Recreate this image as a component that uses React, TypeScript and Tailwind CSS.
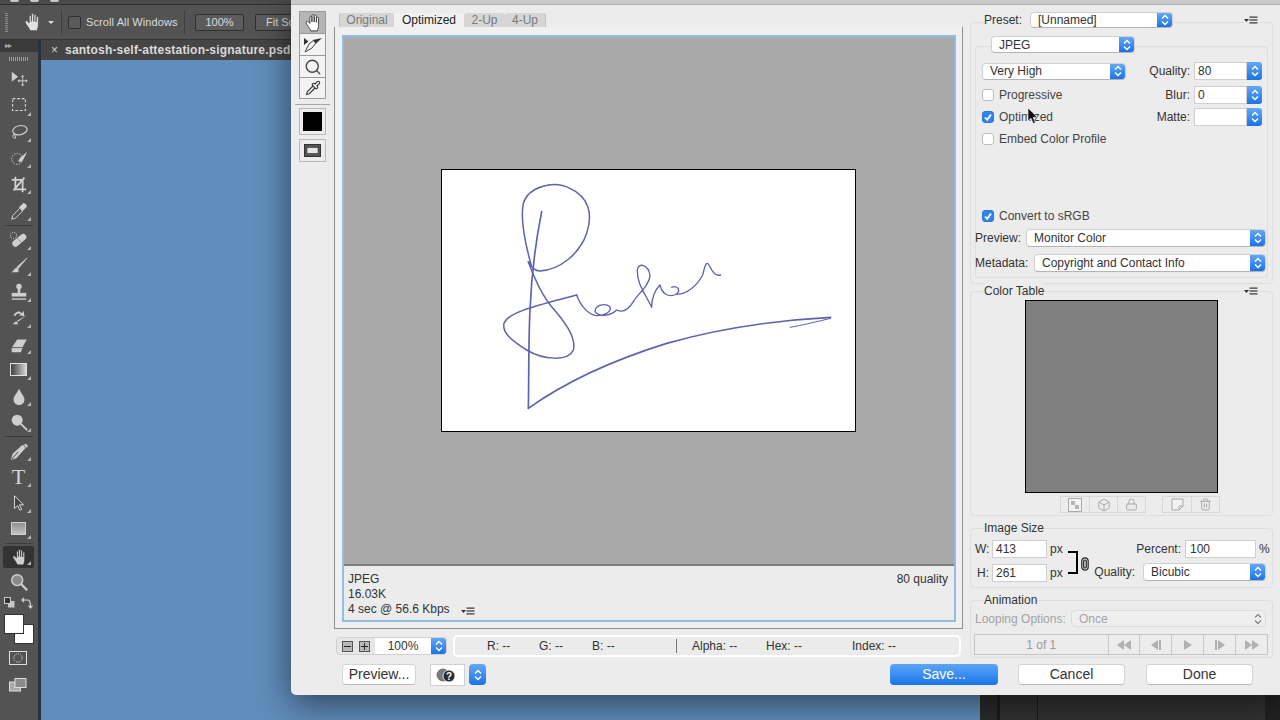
import React from "react";
import { Search, Pipette, Box, Lock, Trash2 } from "lucide-react";

function HandIcon({ size, fill, stroke, sw = 1 }: { size: number; fill: string; stroke: string; sw?: number }) {
  return (
    <svg width={size} height={size} viewBox="-2 0 20 20" fill={fill} stroke={stroke} strokeWidth={sw} strokeLinejoin="round" strokeLinecap="round">
      <path d="M6 18.5 C5 15.5 2 12.5 1.2 10.5 C0.8 8.8 2.8 8 4 9.5 L5.2 11 V4.5 C5.2 3 7.4 3 7.4 4.5 V9.5 V2.8 C7.4 1.2 9.8 1.2 9.8 2.8 V9.5 V3.5 C9.8 2 12.1 2 12.1 3.5 V10 V5.5 C12.1 4 14.4 4 14.4 5.5 V12 C14.4 15 13.6 16.8 13.2 18.5 Z" />
    </svg>
  );
}

function Chevrons({ color = "#fff" }: { color?: string }) {
  return (
    <svg width="8" height="12" viewBox="0 0 8 12" fill="none" stroke={color} strokeWidth="1.4">
      <path d="M1 4.5 L4 1.5 L7 4.5" />
      <path d="M1 7.5 L4 10.5 L7 7.5" />
    </svg>
  );
}

function Stepper({ className }: { className: string }) {
  return (
    <div className={"flex items-center justify-center shrink-0 bg-gradient-to-b from-[#62a8f6] to-[#1a72e6] " + className}>
      <Chevrons />
    </div>
  );
}

function Select({ label, className }: { label: string; className: string }) {
  return (
    <div className={"flex shrink-0 items-stretch bg-white rounded-[4px] border border-[#d0d0d0] border-b-[#b4b4b4] overflow-hidden " + className}>
      <div className="flex-1 pl-[7px] flex items-center text-[#333] leading-none whitespace-nowrap">{label}</div>
      <Stepper className="w-[15px]" />
    </div>
  );
}

function StepField({ value, className }: { value: string; className: string }) {
  return (
    <div className={"flex shrink-0 h-[18px] " + className}>
      <div className="w-[53px] bg-white border border-[#cfcfcf] pl-[3px] flex items-center text-[#333]">{value}</div>
      <Stepper className="w-[15px] rounded-r-[3px]" />
    </div>
  );
}

function Check({ checked, label }: { checked?: boolean; label: string }) {
  return (
    <div className="flex items-center h-[18px] ml-[6px] text-[#444]">
      <div className={"w-[12px] h-[12px] rounded-[3px] flex items-center justify-center border " + (checked ? "bg-[#3084ec] border-[#2a78dc]" : "bg-white border-[#bdbdbd]")}>
        {checked && (
          <svg width="10" height="10" viewBox="0 0 10 10" fill="none" stroke="#fff" strokeWidth="1.8">
            <path d="M2 5.5 L4.2 7.8 L8 2.4" />
          </svg>
        )}
      </div>
      <span className="ml-[5px]">{label}</span>
    </div>
  );
}

function MenuIcon({ className = "" }: { className?: string }) {
  return (
    <svg className={className} width="14" height="8" viewBox="0 0 14 8" fill="#333">
      <path d="M0 3 H5 L2.5 6 Z" />
      <rect x="5.5" y="0.5" width="8" height="1.2" />
      <rect x="5.5" y="3.4" width="8" height="1.2" />
      <rect x="5.5" y="6.3" width="8" height="1.2" />
    </svg>
  );
}

function Tool({ children, more = true, active = false, tall = false }: { children: React.ReactNode; more?: boolean; active?: boolean; tall?: boolean }) {
  return (
    <div className={"relative flex items-center justify-center w-[31px] ml-[3px] " + (active ? "h-[22px] bg-[#333333] rounded-[2px] my-[1px]" : tall ? "h-[26.3px]" : "h-[26px]")}>
      {children}
      {more && <div className="absolute right-[3px] bottom-[3px] w-0 h-0 border-l-[4px] border-l-transparent border-b-[4px] border-b-[#b5b5b5]" />}
    </div>
  );
}

function Ico({ children }: { children: React.ReactNode }) {
  return (
    <svg width="20" height="20" viewBox="0 0 22 22" fill="#cfcfcf" stroke="none">
      {children}
    </svg>
  );
}

function Sep() {
  return <div className="h-px bg-[#3c3c3c] mx-[5px] my-[1px] w-[28px]" />;
}

function Toolbar() {
  return (
    <div className="w-[41px] shrink-0 flex flex-col bg-[#535353] border-r-[3px] border-r-[#28323c] h-full">
      <div className="h-[12px] bg-[#3b3b3b] flex items-center pl-[5px] text-[#aaa] text-[8px] leading-none tracking-[-1px]">▸▸</div>
      <div className="h-[14px] flex items-center justify-center">
        <div className="w-[20px] h-[4px] bg-[repeating-linear-gradient(90deg,#9a9a9a_0,#9a9a9a_1px,transparent_1px,transparent_2px)]" />
      </div>
      <Tool tall more={false}>
        <Ico>
          <path d="M3 3 L3 14 L10 8.5 Z" />
          <path d="M15 7.5 V18 M10 13 H20" stroke="#cfcfcf" strokeWidth="1" />
          <path d="M15 6.5 l-2 2 h4 Z M15 19 l-2 -2 h4 Z M9.5 13 l2 -2 v4 Z M20.5 13 l-2 -2 v4 Z" />
        </Ico>
      </Tool>
      <Tool tall>
        <Ico>
          <rect x="4" y="4" width="14" height="13" fill="none" stroke="#d8d8d8" strokeWidth="1.2" strokeDasharray="3 2" />
        </Ico>
      </Tool>
      <Tool tall>
        <Ico>
          <ellipse cx="12" cy="9" rx="8" ry="5" fill="none" stroke="#cfcfcf" strokeWidth="1.3" transform="rotate(-12 12 9)" />
          <path d="M6 13 C3 15 4 18 7 18 C8 16 6 15 6 13" fill="none" stroke="#cfcfcf" strokeWidth="1.1" />
        </Ico>
      </Tool>
      <Tool tall>
        <Ico>
          <circle cx="9" cy="12" r="6" fill="none" stroke="#d8d8d8" strokeWidth="1.1" strokeDasharray="1.5 1.5" />
          <path d="M20 4 L12 11 L10 15 L14 15 L16 12 Z" />
        </Ico>
      </Tool>
      <Tool tall>
        <Ico>
          <path d="M7 3 V17 H19 M3 6.5 H15 V20 M17 4 L5 18" fill="none" stroke="#d0d0d0" strokeWidth="2" />
        </Ico>
      </Tool>
      <Tool tall>
        <Ico>
          <path d="M3 20 L4 16 L12 8 L15 11 L7 19 Z" fill="none" stroke="#d4d4d4" strokeWidth="1.1" />
          <path d="M11 7 L15 3 C17 1 21 5 19 7 L15 11 Z" fill="#d4d4d4" />
        </Ico>
      </Tool>
      <Sep />
      <Tool>
        <Ico>
          <rect x="2" y="8" width="18" height="7" rx="3.5" transform="rotate(-40 11 11)" fill="#cfcfcf" />
          <path d="M8 8 L14 14" stroke="#555" strokeWidth="1" strokeDasharray="1 1" />
          <circle cx="5" cy="6" r="3.5" fill="none" stroke="#ddd" strokeWidth="1" strokeDasharray="1.2 1.2" />
        </Ico>
      </Tool>
      <Tool>
        <Ico>
          <path d="M20 2 L10 14 L8.5 12.5 Z" stroke="#cfcfcf" strokeWidth="0.8" />
          <path d="M9 13 C5 13 6 17 2 18 H10 C11 16 11 15 9 13 Z" />
        </Ico>
      </Tool>
      <Tool>
        <Ico>
          <circle cx="11" cy="5" r="3" />
          <rect x="9.6" y="7" width="2.8" height="5" />
          <path d="M3 12 H19 V16 H3 Z" />
          <rect x="3" y="18" width="16" height="1.5" />
        </Ico>
      </Tool>
      <Tool>
        <Ico>
          <path d="M5 8 C8 3 12 3 14 6 L16 3 L17 9 L11 8 L13 7 C11 5 8 6 7 9 Z" />
          <path d="M19 8 L10 15 L9 14 Z M9 15 C6 14 6 18 2 18 H10 Z" />
        </Ico>
      </Tool>
      <Tool>
        <Ico>
          <path d="M3 15 L9 6 H20 L15 15 L13 20 H3 Z" />
          <path d="M3 15 H15 L20 6" fill="none" stroke="#555" strokeWidth="1" />
        </Ico>
      </Tool>
      <Tool>
        <svg width="17" height="13" viewBox="0 0 18 14">
          <defs>
            <linearGradient id="grd" x1="0" x2="1" y1="0" y2="0">
              <stop offset="0" stopColor="#3a3a3a" />
              <stop offset="1" stopColor="#d8d8d8" />
            </linearGradient>
          </defs>
          <rect x="0.5" y="0.5" width="17" height="13" fill="url(#grd)" stroke="#eee" />
        </svg>
      </Tool>
      <Tool>
        <Ico>
          <path d="M11 3 C13 8 17 11 17 15 A6 6 0 0 1 5 15 C5 11 9 8 11 3 Z" />
        </Ico>
      </Tool>
      <Tool>
        <Ico>
          <circle cx="9" cy="9" r="6" />
          <path d="M13 13 L20 20" stroke="#cfcfcf" strokeWidth="2" />
        </Ico>
      </Tool>
      <Sep />
      <Tool>
        <Ico>
          <path d="M19 3 L21 6 L18 8 L8 19 L2 21 L4 14 L14 5 Z" />
          <path d="M15 3 L20 9" stroke="#535353" strokeWidth="1" />
          <path d="M3 20 L10 12" stroke="#333" strokeWidth="1" />
        </Ico>
      </Tool>
      <Tool>
        <span className="font-['Liberation_Serif',serif] text-[22px] leading-none text-[#d4d4d4]">T</span>
      </Tool>
      <Tool>
        <Ico>
          <path d="M6 3 V17 L9.5 14 L12 19 L14 18 L11.5 13 L16 13 Z" fill="#444" stroke="#e6e6e6" strokeWidth="1" />
        </Ico>
      </Tool>
      <Tool>
        <svg width="15" height="13" viewBox="0 0 16 14">
          <defs>
            <linearGradient id="rct" x1="0" x2="0" y1="0" y2="1">
              <stop offset="0" stopColor="#8f8f8f" />
              <stop offset="1" stopColor="#c4c4c4" />
            </linearGradient>
          </defs>
          <rect x="0.5" y="0.5" width="15" height="13" fill="url(#rct)" stroke="#d8d8d8" />
        </svg>
      </Tool>
      <Sep />
      <Tool active>
        <HandIcon size={18} fill="#cfcfcf" stroke="#333333" sw={0.8} />
      </Tool>
      <Tool more={false}>
        <Ico>
          <circle cx="9" cy="9" r="6" fill="#8a8a8a" stroke="#d0d0d0" strokeWidth="1.6" />
          <path d="M13 13 L20 20" stroke="#cfcfcf" strokeWidth="2.5" />
        </Ico>
      </Tool>
      <div className="flex items-center justify-between pl-[4px] pr-[5px] h-[14px] mt-[1px]">
        <svg width="11" height="11" viewBox="0 0 11 11">
          <rect x="4" y="4" width="6.5" height="6.5" fill="#c8c8c8" />
          <rect x="0.5" y="0.5" width="6" height="6" fill="#333" stroke="#ccc" />
        </svg>
        <svg width="12" height="12" viewBox="0 0 12 12" fill="none" stroke="#d8d8d8" strokeWidth="1.2">
          <path d="M1 3 H7 C9 3 9.5 5 9.5 10" />
          <path d="M3 1 L1 3 L3 5 M7.5 8.5 L9.5 11 L11.5 8.5" />
        </svg>
      </div>
      <div className="flex flex-col ml-[4px] mt-[4px] w-[30px]">
        <div className="w-[20px] h-[20px] bg-white border border-[#333] z-10" />
        <div className="w-[20px] h-[20px] bg-white border border-[#333] -mt-[10px] ml-[10px]" />
      </div>
      <div className="flex justify-center mt-[7px] pr-[3px]">
        <svg width="18" height="14" viewBox="0 0 18 14" fill="none">
          <rect x="0.5" y="0.5" width="17" height="13" stroke="#ddd" />
          <circle cx="9" cy="7" r="4.2" stroke="#ddd" strokeDasharray="1.2 1.2" />
        </svg>
      </div>
      <div className="flex justify-center mt-[13px] pr-[2px]">
        <svg width="18" height="14" viewBox="0 0 18 14">
          <rect x="0.5" y="4" width="11" height="9" fill="#aaa" stroke="#ddd" />
          <rect x="6" y="0.5" width="11" height="9" fill="#8a8a8a" stroke="#ddd" />
        </svg>
      </div>
    </div>
  );
}

function OptionsBar() {
  return (
    <div className="h-[40px] shrink-0 bg-[#535353] relative flex flex-col">
      <div className="h-[5px] bg-[#4a4a4a] border-b border-b-[#2e2e2e] flex items-start gap-[11px] pl-[10px]">
        <div className="w-[9px] h-[2px] bg-[#c8c8c8] rounded-b-full" />
        <div className="w-[9px] h-[2px] bg-[#c8c8c8] rounded-b-full" />
        <div className="w-[9px] h-[2px] bg-[#c8c8c8] rounded-b-full" />
      </div>
      <div className="flex-1 flex items-center text-[11px] text-[#dcdcdc] border-b border-b-[#333]">
        <div className="ml-[5px] w-[3px] h-[20px] bg-[repeating-linear-gradient(0deg,#8c8c8c_0,#8c8c8c_1px,transparent_1px,transparent_2px)]" />
        <div className="ml-[14px]">
          <HandIcon size={20} fill="#e2e2e2" stroke="#535353" sw={0.8} />
        </div>
        <div className="ml-[6px] w-0 h-0 border-x-[3px] border-x-transparent border-t-[3px] border-t-[#ddd]" />
        <div className="ml-[7px] w-px h-[24px] bg-[#3f3f3f]" />
        <div className="ml-[6px] w-[13px] h-[13px] rounded-[2px] bg-[#5a5a5a] border border-[#2f2f2f]" />
        <span className="ml-[5px] w-[98px] whitespace-nowrap tracking-[0.1px]">Scroll All Windows</span>
        <div className="w-px h-[24px] bg-[#3f3f3f]" />
        <div className="ml-[10px] w-[49px] h-[17px] flex items-center justify-center border border-[#2f2f2f] rounded-[2px] bg-[#5c5c5c]">100%</div>
        <div className="ml-[11px] w-[70px] h-[17px] pl-[10px] flex items-center border border-[#2f2f2f] rounded-[2px] bg-[#5c5c5c]">Fit Screen</div>
      </div>
    </div>
  );
}

function SlicePen() {
  return (
    <svg width="20" height="18" viewBox="0 0 20 18" fill="none">
      <path d="M1 2 L1 9 L5.5 5.5 Z" fill="#333" />
      <path d="M19 2 L10 4 L12.5 8 Z" fill="#333" />
      <path d="M11 4 L6 8 L2 16 L9 12 L13 7" stroke="#444" strokeWidth="1" />
    </svg>
  );
}

function ToolColumn() {
  return (
    <div className="w-[43px] shrink-0 pt-[11px] flex flex-col items-start">
      <div className="ml-[8px] w-[27px] flex flex-col border border-[#9a9a9a]">
        <div className="h-[22px] bg-[#b5b5b5] flex items-center justify-center border-b border-[#9a9a9a]">
          <HandIcon size={19} fill="#fff" stroke="#444" sw={1} />
        </div>
        <div className="h-[22px] bg-[#f3f3f3] flex items-center justify-center border-b border-[#9a9a9a]">
          <SlicePen />
        </div>
        <div className="h-[22px] bg-[#f3f3f3] flex items-center justify-center border-b border-[#9a9a9a]">
          <Search size={18} stroke="#444" strokeWidth={1.8} />
        </div>
        <div className="h-[20px] bg-[#f3f3f3] flex items-center justify-center">
          <Pipette size={16} stroke="#333" strokeWidth={1.6} />
        </div>
      </div>
      <div className="ml-[4px] mt-[5px] w-[35px] h-px bg-[#a8a8a8]" />
      <div className="ml-[8px] mt-[3px] w-[27px] h-[27px] border border-[#b8b8b8] flex items-center justify-center">
        <div className="w-[19px] h-[19px] bg-black" />
      </div>
      <div className="ml-[8px] mt-[4px] w-[27px] h-[23px] border border-[#b8b8b8] flex items-center justify-center">
        <svg width="17" height="13" viewBox="0 0 17 13">
          <rect x="0.5" y="0.5" width="16" height="12" fill="#555" stroke="#333" />
          <rect x="3" y="3.5" width="11" height="6" fill="#e6e6e6" stroke="#333" strokeWidth="0.6" />
        </svg>
      </div>
    </div>
  );
}

function Signature() {
  return (
    <svg className="w-full h-full" viewBox="-114 0 1239 783" fill="none" stroke="#5f62ae" strokeWidth="5" strokeLinecap="round" strokeLinejoin="round">
      <path d="M185 125 C170 200 155 300 150 420 C145 520 147 620 145 715" />
      <path d="M145 715 C250 640 400 570 560 520 C720 475 900 450 1052 442" />
      <path d="M1052 445 C1010 455 970 465 930 472" strokeWidth="3" />
      <path d="M155 290 C135 220 120 150 130 100 C145 50 220 30 270 55 C325 80 340 130 320 190 C300 250 240 300 180 303 C165 303 155 295 145 275" strokeWidth="4.5" />
      <path d="M145 275 C165 330 190 380 215 410 C250 450 290 500 280 540 C265 575 190 570 140 540 C100 515 65 490 72 460 C85 425 180 405 290 375" strokeWidth="4.5" />
      <path d="M290 375 C300 405 325 435 350 437 C375 437 395 425 390 410 C375 398 345 405 345 425 C360 445 395 435 410 420 C430 430 445 420 460 395 C475 370 510 345 510 315 C505 285 475 275 472 300 C470 340 495 370 515 412 C515 385 525 360 540 345 C545 370 565 385 590 372 C605 360 590 345 575 352" strokeWidth="4" />
      <path d="M590 372 C615 375 650 350 668 315 C675 285 680 268 690 290 C700 312 710 318 722 315" strokeWidth="4" />
    </svg>
  );
}

function Tabs() {
  return (
    <div className="h-[14px] flex pl-[5px] text-[#7a7a7a] leading-none">
      <div className="w-[55px] bg-[#d6d6d6] rounded-t-[3px] flex items-center justify-center border-l border-[#c0c0c0]">Original</div>
      <div className="w-[70px] bg-[#f1f1f1] rounded-t-[3px] flex items-center justify-center text-[#222]">Optimized</div>
      <div className="w-[41px] bg-[#d6d6d6] rounded-t-[3px] flex items-center justify-center">2-Up</div>
      <div className="w-[41px] bg-[#d6d6d6] rounded-t-[3px] flex items-center justify-center border-r border-[#c0c0c0]">4-Up</div>
    </div>
  );
}

function CenterColumn() {
  return (
    <div className="w-[629px] shrink-0 pt-[13px] flex flex-col">
      <Tabs />
      <div className="h-[602px] shrink-0 bg-[#f0f0f0] border-x border-b border-[#8e8e8e] pt-[8px] pl-[7px] pr-[6px]">
        <div className="h-[587px] border-2 border-[#8fbde8] flex flex-col bg-[#ececec]">
          <div className="h-[527px] shrink-0 bg-[#a9a9a9] flex items-center justify-center pr-[2px]">
            <div className="w-[415px] h-[263px] bg-white border border-black">
              <Signature />
            </div>
          </div>
          <div className="h-[2px] shrink-0 bg-[#7e7e7e]" />
          <div className="flex-1 flex justify-between pl-[4px] pr-[6px] pt-[6px] leading-[15px] text-[#333]">
            <div className="flex flex-col">
              <span>JPEG</span>
              <span>16.03K</span>
              <div className="flex items-center">
                <span>4 sec @ 56.6 Kbps</span>
                <MenuIcon className="ml-[11px] mt-[2px]" />
              </div>
            </div>
            <span>80 quality</span>
          </div>
        </div>
      </div>
      <div className="mt-[6px] h-[22px] shrink-0 flex items-center pl-[2px]">
        <div className="w-[111px] h-[18px] flex items-center border border-[#d0d0d0] rounded-[4px] bg-[#e6e6e6] overflow-hidden">
          <div className="ml-[5px] w-[11px] h-[11px] border border-[#555] bg-[#b8b8b8] flex items-center justify-center">
            <div className="w-[7px] h-px bg-[#222]" />
          </div>
          <div className="relative ml-[6px] w-[11px] h-[11px] border border-[#555] bg-[#b8b8b8] flex items-center justify-center">
            <div className="w-[7px] h-px bg-[#222]" />
            <div className="absolute left-[4px] top-[1px] w-px h-[7px] bg-[#222]" />
          </div>
          <div className="ml-[5px] flex-1 h-full bg-white flex items-center justify-center text-[#333]">100%</div>
          <Stepper className="w-[15px] h-full" />
        </div>
        <div className="ml-[6px] w-[508px] h-[22px] border-2 border-white rounded-[5px] flex items-center text-[#333] bg-[#ebebeb]">
          <span className="ml-[32px] w-[52px]">R: --</span>
          <span className="w-[53px]">G: --</span>
          <span className="w-[84px]">B: --</span>
          <div className="w-px h-[14px] bg-[#777]" />
          <span className="ml-[15px] w-[74px]">Alpha: --</span>
          <span className="w-[86px]">Hex: --</span>
          <span>Index: --</span>
        </div>
      </div>
    </div>
  );
}

function Group({ className, children }: { className: string; children: React.ReactNode }) {
  return <div className={"border border-[#dedede] rounded-[4px] shrink-0 " + className}>{children}</div>;
}

function IconBtn({ children, className = "w-[28px]" }: { children: React.ReactNode; className?: string }) {
  return <div className={"h-[15px] flex items-center justify-center border-l border-[#d8d8d8] first:border-l-0 " + className}>{children}</div>;
}

function PlayBtn({ d }: { d: string }) {
  return (
    <div className="w-[32px] border-l border-[#c8c8c8] flex items-center justify-center">
      <svg width="16" height="10" viewBox="0 0 16 10" fill="#b0b0b0">
        <path d={d} />
      </svg>
    </div>
  );
}

function RightColumn() {
  return (
    <div className="flex-1 pt-[22px] flex flex-col text-[#333]">
      <Group className="ml-[7px] w-[303px] h-[262px]">
        <div className="-mt-[11px] h-[16px] flex items-center">
          <span className="ml-[13px] w-[46px] bg-[#ececec]">Preset:</span>
          <Select label="[Unnamed]" className="w-[143px] h-[16px]" />
          <MenuIcon className="ml-auto mr-[14px] bg-[#ececec]" />
        </div>
        <Group className="ml-[4px] mt-[18px] w-[293px] h-[232px]">
          <div className="-mt-[11px] h-[17px] flex">
            <Select label="JPEG" className="ml-[15px] w-[144px] h-[17px]" />
          </div>
          <div className="mt-[9px] h-[18px] flex items-center">
            <Select label="Very High" className="ml-[6px] w-[144px] h-[17px]" />
            <span className="ml-auto mr-[4px]">Quality:</span>
            <StepField value="80" className="mr-[5px]" />
          </div>
          <div className="mt-[6px] h-[18px] flex items-center">
            <Check label="Progressive" />
            <span className="ml-auto mr-[4px]">Blur:</span>
            <StepField value="0" className="mr-[5px]" />
          </div>
          <div className="mt-[4px] h-[18px] flex items-center">
            <Check checked label="Optimized" />
            <span className="ml-auto mr-[4px]">Matte:</span>
            <StepField value="" className="mr-[5px]" />
          </div>
          <div className="mt-[4px]">
            <Check label="Embed Color Profile" />
          </div>
          <div className="mt-[59px]">
            <Check checked label="Convert to sRGB" />
          </div>
          <div className="mt-[4px] h-[18px] flex items-center">
            <span className="-ml-px">Preview:</span>
            <Select label="Monitor Color" className="ml-auto mr-px w-[240px] h-[18px]" />
          </div>
          <div className="mt-[7px] h-[18px] flex items-center">
            <span className="-ml-px">Metadata:</span>
            <Select label="Copyright and Contact Info" className="ml-auto mr-px w-[232px] h-[18px]" />
          </div>
        </Group>
      </Group>
      <Group className="ml-[7px] w-[303px] mt-[7px] h-[225px]">
        <div className="-mt-[9px] h-[16px] flex items-center">
          <span className="ml-[13px] px-0 bg-[#ececec]">Color Table</span>
          <MenuIcon className="ml-auto mr-[14px] bg-[#ececec]" />
        </div>
        <div className="ml-[54px] mt-px w-[193px] h-[193px] bg-[#808080] border border-black" />
        <div className="ml-[89px] mt-[3px] flex items-start text-[#a8a8a8]">
          <div className="flex border border-[#d8d8d8]">
            <IconBtn>
              <svg width="14" height="14" viewBox="0 0 14 14">
                <rect x="0.5" y="0.5" width="13" height="13" fill="#f2f2f2" stroke="#aaa" />
                <path d="M3 3 H7 V7 H3 Z M7 7 H11 V11 H7 Z" fill="#b5b5b5" />
              </svg>
            </IconBtn>
            <IconBtn>
              <Box size={14} strokeWidth={1.6} />
            </IconBtn>
            <IconBtn>
              <Lock size={13} strokeWidth={1.8} />
            </IconBtn>
          </div>
          <div className="ml-[16px] flex border border-[#d8d8d8]">
            <IconBtn>
              <svg width="13" height="13" viewBox="0 0 13 13" fill="#f2f2f2" stroke="#a8a8a8">
                <path d="M1 1 H12 V8 L8 12 H1 Z" />
                <path d="M8 12 V8 H12" fill="none" />
              </svg>
            </IconBtn>
            <IconBtn>
              <Trash2 size={13} strokeWidth={1.8} />
            </IconBtn>
          </div>
        </div>
      </Group>
      <Group className="ml-[7px] w-[303px] mt-[12px] h-[60px]">
        <div className="-mt-[9px] h-[16px] flex items-center">
          <span className="ml-[13px] bg-[#ececec]">Image Size</span>
        </div>
        <div className="mt-[4px] flex h-[42px]">
          <div className="ml-[4px] w-[89px] flex flex-col gap-[6px]">
            <div className="h-[18px] flex items-center">
              <span className="w-[17px]">W:</span>
              <div className="w-[55px] h-[18px] bg-white border border-[#cfcfcf] pl-[3px] flex items-center">413</div>
              <span className="ml-[3px]">px</span>
            </div>
            <div className="h-[18px] flex items-center">
              <span className="w-[17px] pl-[2px]">H:</span>
              <div className="w-[55px] h-[18px] bg-white border border-[#cfcfcf] pl-[3px] flex items-center">261</div>
              <span className="ml-[3px]">px</span>
            </div>
          </div>
          <div className="ml-[4px] mt-[11px] w-[10px] h-[23px] border-y-2 border-r-2 border-black" />
          <div className="ml-[3px] mt-[17px]">
            <svg width="8" height="14" viewBox="0 0 8 14" fill="#e6e6e6" stroke="#222" strokeWidth="1.2">
              <rect x="0.8" y="0.8" width="6.4" height="12.4" rx="3.2" />
              <rect x="2.7" y="3" width="2.6" height="8" rx="1.3" />
            </svg>
          </div>
          <div className="flex-1 flex flex-col gap-[5px]">
            <div className="h-[18px] flex items-center justify-end">
              <span className="mr-[4px]">Percent:</span>
              <div className="w-[71px] h-[18px] bg-white border border-[#cfcfcf] pl-[4px] flex items-center">100</div>
              <span className="ml-[3px] mr-[4px] w-[9px]">%</span>
            </div>
            <div className="h-[18px] flex items-center justify-end">
              <span className="mr-[8px]">Quality:</span>
              <Select label="Bicubic" className="w-[123px] h-[18px] mr-[6px]" />
            </div>
          </div>
        </div>
      </Group>
      <Group className="ml-[7px] w-[303px] mt-[12px] h-[58px]">
        <div className="-mt-[9px] h-[16px] flex items-center">
          <span className="ml-[13px] bg-[#ececec]">Animation</span>
        </div>
        <div className="mt-[2px] h-[17px] flex items-center text-[#a2a2a2]">
          <span className="ml-[4px]">Looping Options:</span>
          <div className="ml-auto mr-[6px] w-[195px] h-[17px] border border-[#dcdcdc] rounded-[4px] bg-[#efefef] flex items-center justify-between pl-[7px] pr-[3px]">
            <span>Once</span>
            <Chevrons color="#8a8a8a" />
          </div>
        </div>
        <div className="ml-[3px] mt-[7px] w-[294px] h-[21px] border border-[#c4c4c4] flex text-[#9a9a9a]">
          <div className="w-[133px] flex items-center justify-center">1 of 1</div>
          <PlayBtn d="M8 0 V10 L1 5 Z M15 0 V10 L8 5 Z" />
          <PlayBtn d="M10 0 V10 L3 5 Z M11 0 H13 V10 H11 Z" />
          <PlayBtn d="M4 0 V10 L12 5 Z" />
          <PlayBtn d="M3 0 H5 V10 H3 Z M6 0 V10 L13 5 Z" />
          <PlayBtn d="M1 0 V10 L8 5 Z M8 0 V10 L15 5 Z" />
        </div>
      </Group>
    </div>
  );
}

function Button({ label, className }: { label: string; className: string }) {
  return (
    <div className={"h-[21px] flex items-center justify-center rounded-[4px] bg-white border border-[#d4d4d4] border-b-[#b8b8b8] text-[14px] text-[#333] " + className}>
      {label}
    </div>
  );
}

function BottomRow() {
  return (
    <div className="mt-[4px] flex items-start h-[23px]">
      <Button label="Preview..." className="ml-[51px] w-[74px]" />
      <div className="ml-[14px] w-[35px] h-[22px] bg-white border border-[#d0d0d0] flex items-center justify-center">
        <svg width="24" height="14" viewBox="0 0 24 14">
          <circle cx="7" cy="7" r="6.5" fill="#7a7a7a" />
          <circle cx="13" cy="8" r="6" fill="#2c2c2c" stroke="#fff" strokeWidth="0.8" />
          <text x="13" y="11.5" textAnchor="middle" fontSize="10" fontWeight="700" fill="#fff" fontFamily="Liberation Sans">?</text>
        </svg>
      </div>
      <Stepper className="ml-[4px] w-[17px] h-[21px] rounded-[4px]" />
      <div className="ml-[404px] w-[108px] h-[21px] rounded-[4px] flex items-center justify-center bg-gradient-to-b from-[#5aa5f6] to-[#1676ea] text-white text-[14px]">
        Save...
      </div>
      <Button label="Cancel" className="ml-[20px] w-[107px]" />
      <Button label="Done" className="ml-[21px] w-[107px]" />
    </div>
  );
}

export default function App() {
  return (
    <div className="relative w-[1280px] h-[720px] overflow-hidden flex flex-col bg-[#535353] font-['Liberation_Sans',Arial,sans-serif] text-[12px]">
      <OptionsBar />
      <div className="flex-1 flex min-h-0">
        <Toolbar />
        <div className="flex-1 flex flex-col min-w-0 bg-[#608dbb]">
          <div className="h-[20px] bg-[#454545] flex items-center shrink-0">
            <span className="ml-[10px] text-[#d0d0d0] text-[12px] leading-none">×</span>
            <span className="ml-[7px] font-bold text-[#dadada] whitespace-nowrap tracking-[0.2px]">santosh-self-attestation-signature.psd</span>
          </div>
        </div>
        <div className="w-[300px] shrink-0 bg-[#2b2b2b] flex">
          <div className="ml-[17px] w-[3px] bg-[#1c1c1c]" />
          <div className="w-[37px] bg-[#323232]" />
          <div className="w-px bg-[#1c1c1c]" />
          <div className="flex-1 bg-[#333333]" />
          <div className="w-[15px] bg-[#222222]" />
        </div>
      </div>
      <div className="absolute left-[291px] top-0 w-[989px] h-[695px] bg-[#ececec] rounded-bl-[5px] shadow-[0_8px_34px_rgba(0,0,0,0.55)] flex flex-col">
        <div className="h-[5px] bg-[#c9c9c9] border-b border-[#b0b0b0] shrink-0" />
        <div className="h-[660px] -mt-[5px] flex shrink-0">
          <ToolColumn />
          <CenterColumn />
          <RightColumn />
        </div>
        <BottomRow />
      </div>
      <svg className="absolute left-[1027px] top-[107px]" width="12" height="18" viewBox="0 0 12 18" fill="#111" stroke="#ffffff" strokeWidth="0.6">
        <path d="M1 1 V14 L4 11.2 L6.2 16.5 L8.4 15.6 L6.2 10.4 L10.4 10.2 Z" />
      </svg>
    </div>
  );
}
